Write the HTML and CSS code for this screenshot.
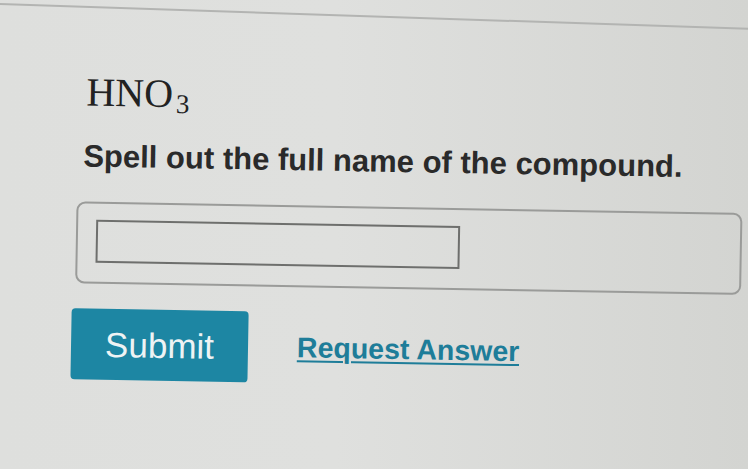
FILE: index.html
```html
<!DOCTYPE html>
<html>
<head>
<meta charset="utf-8">
<link rel="stylesheet" href="styles.css">
</head>
<body>
<div class="page">
  <div class="topline"></div>
  <div class="content">
    <div class="formula">HNO<sub>3</sub></div>
    <p class="prompt">Spell out the full name of the compound.</p>
    <div class="answer-box">
      <input class="answer" type="text">
    </div>
    <div class="actions">
      <button class="submit">Submit</button>
      <a class="request" href="#">Request Answer</a>
    </div>
  </div>
</div>
</body>
</html>
```
FILE: styles.css
```css
html, body {
  margin: 0;
  padding: 0;
  width: 748px;
  height: 469px;
  overflow: hidden;
  background: linear-gradient(90deg, #dedfdd 0%, #dfe0de 45%, #d3d4d1 100%);
}
.page {
  width: 780px;
  transform: rotate(1deg);
  transform-origin: 0 0;
}
.topline {
  height: 2px;
  background: #b3b4b2;
  margin: 3px 0 0 0;
  transform: rotate(0.9deg);
  transform-origin: 0 0;
}
.content {
  padding: 66px 0 0 88px;
}
.formula {
  font-family: "Liberation Serif", "DejaVu Serif", serif;
  font-size: 40px;
  color: #222;
  line-height: 40px;
}
.formula sub {
  font-size: 27px;
  vertical-align: -6px;
  line-height: 0;
  margin-left: 3px;
}
.prompt {
  font-family: "Liberation Sans", Arial, sans-serif;
  font-weight: bold;
  font-size: 31px;
  color: #2a2a2a;
  margin: 27px 0 0 -2px;
  line-height: 34px;
}
.answer-box {
  margin: 28px 0 0 -8px;
  width: 644px;
  border: 2px solid #9a9b99;
  border-radius: 9px;
  padding: 16px 0 0 18px;
  box-sizing: content-box;
  height: 62px;
}
.answer {
  display: block;
  width: 364px;
  height: 43px;
  box-sizing: border-box;
  border: 2px solid #6e6f6d;
  background: transparent;
  margin: 0;
  padding: 0;
}
.actions {
  display: flex;
  align-items: center;
  margin: 25px 0 0 -11px;
  gap: 49px;
}
.submit {
  width: 177px;
  height: 71px;
  border: none;
  border-radius: 4px;
  background: #1d86a3;
  color: #eef3f4;
  font-family: "Liberation Sans", Arial, sans-serif;
  font-size: 35px;
  padding: 0;
}
.request {
  font-family: "Liberation Sans", Arial, sans-serif;
  font-weight: bold;
  font-size: 28.5px;
  color: #1e7d99;
  text-decoration: underline;
  text-decoration-thickness: 2px;
  text-underline-offset: 3px;
}
```
